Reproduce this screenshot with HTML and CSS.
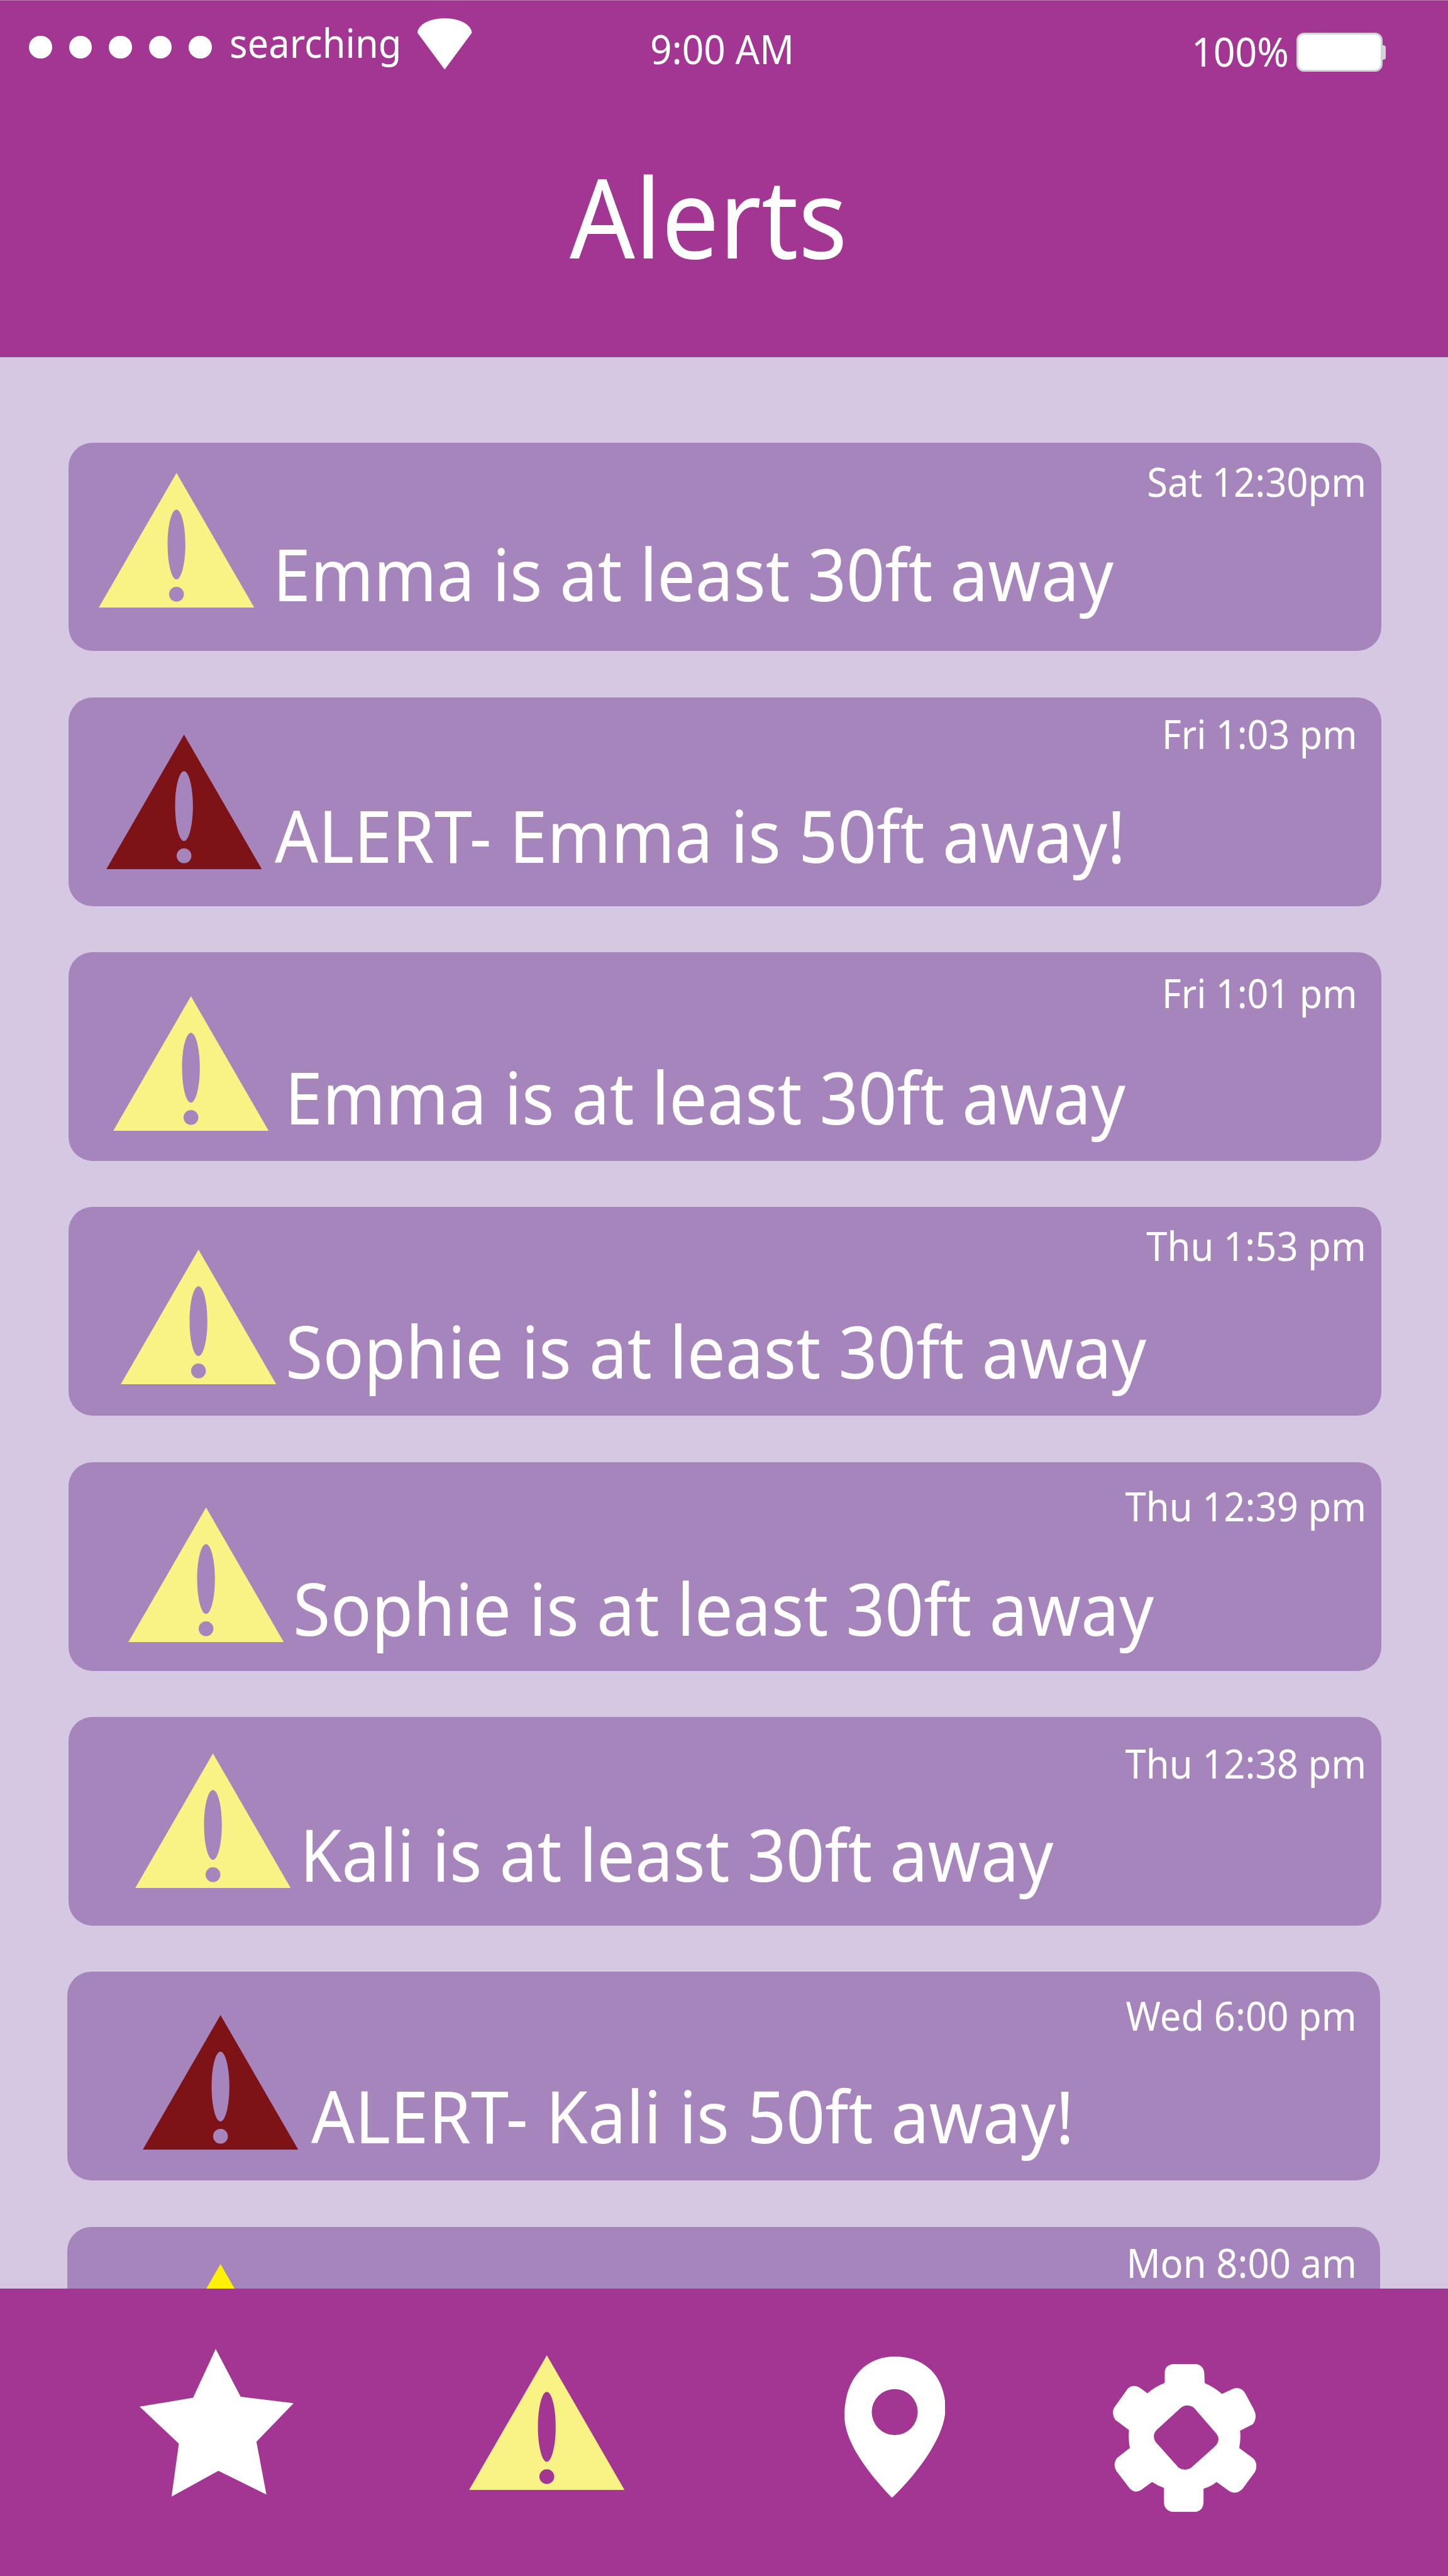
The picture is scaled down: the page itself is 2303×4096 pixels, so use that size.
FILE: index.html
```html
<!DOCTYPE html>
<html lang="en">
<head>
<meta charset="utf-8">
<title>Alerts</title>
<link rel="stylesheet" href="styles.css">
</head>
<body>
<svg width="0" height="0" class="sprite" aria-hidden="true">
  <symbol id="warning" viewBox="0 0 336 291">
    <path fill-rule="evenodd" d="M168 0L336 291H0ZM168 79C157.400 79 148.800 112.800 148.800 154.500S157.400 230 168 230S187.200 196.200 187.200 154.500S178.600 79 168 79ZM168 246A16 16 0 0 0 168 278A16 16 0 0 0 168 246Z"/>
  </symbol>
</svg>
<div class="screen">
  <header class="header">
    <div class="status">
      <div class="signal"><i></i><i></i><i></i><i></i><i></i></div>
      <span class="status-text carrier">searching</span>
      <svg class="wifi" viewBox="0 0 117.2 110.7"><path d="M0 31.700A58.600 31.700 0 0 1 117.200 31.700L58.600 110.700Z"/></svg>
      <span class="status-text clock">9:00 AM</span>
      <span class="status-text charge">100%</span>
      <div class="battery"><div class="battery-body"></div><div class="battery-tip"></div></div>
    </div>
    <h1 class="title">Alerts</h1>
  </header>

  <main class="list">
    <article class="card card-1">
      <svg class="icon"><use href="#warning"/></svg>
      <div class="body"><time class="time">Sat 12:30pm</time><p class="message">Emma is at least 30ft away</p></div>
    </article>
    <article class="card card-2 danger">
      <svg class="icon"><use href="#warning"/></svg>
      <div class="body"><time class="time">Fri 1:03 pm</time><p class="message">ALERT- Emma is 50ft away!</p></div>
    </article>
    <article class="card card-3">
      <svg class="icon"><use href="#warning"/></svg>
      <div class="body"><time class="time">Fri 1:01 pm</time><p class="message">Emma is at least 30ft away</p></div>
    </article>
    <article class="card card-4">
      <svg class="icon"><use href="#warning"/></svg>
      <div class="body"><time class="time">Thu 1:53 pm</time><p class="message">Sophie is at least 30ft away</p></div>
    </article>
    <article class="card card-5">
      <svg class="icon"><use href="#warning"/></svg>
      <div class="body"><time class="time">Thu 12:39 pm</time><p class="message">Sophie is at least 30ft away</p></div>
    </article>
    <article class="card card-6">
      <svg class="icon"><use href="#warning"/></svg>
      <div class="body"><time class="time">Thu 12:38 pm</time><p class="message">Kali is at least 30ft away</p></div>
    </article>
    <article class="card card-7 danger">
      <svg class="icon"><use href="#warning"/></svg>
      <div class="body"><time class="time">Wed 6:00 pm</time><p class="message">ALERT- Kali is 50ft away!</p></div>
    </article>
    <article class="card card-8 fresh">
      <svg class="icon"><use href="#warning"/></svg>
      <div class="body"><time class="time">Mon 8:00 am</time></div>
    </article>
  </main>

  <nav class="tabs">
    <svg class="tab-star" viewBox="301 5069 333 319"><path d="M465.300 5069L519.200 5172L633.600 5186.100L553.200 5269.100L574.800 5383.300L471.100 5332L370 5387.700L385.700 5273.200L301.100 5193.500L416.400 5174.300Z"/></svg>
    <svg class="tab-warning"><use href="#warning"/></svg>
    <svg class="tab-pin" viewBox="0 0 218 305"><path fill-rule="evenodd" d="M108.600 0C175 0 218 44 218 113C218 168 165 245 102.800 305C54 254 0 186 0 127.800C0 50 44 0 108.600 0ZM108.600 70.200A49.700 49.700 0 0 0 108.600 169.600A49.700 49.700 0 0 0 108.600 70.200Z"/></svg>
    <svg class="tab-gear" viewBox="0 0 310 318.7"><path fill-rule="evenodd" d="M111.900 40.600V18.500Q111.900 3 129.300 0H179.900Q196 3 197.300 20.300L198.100 41Q219 50 235.400 64.600L258 54Q273 47 284.400 60.900L304.200 97.900Q313 115 301.800 130L274.400 143.700Q276.500 162 272.700 181.300L303.400 203.900Q314 216 306.700 232.700L279.400 269.600Q264 284 248.700 272.500L223.800 254.400Q212 264 195.600 268.900V299.100Q194.500 316 179.900 318.700H127.700Q111 315 110.300 299.100V267.400Q96 262 84.600 254.400L61.300 271.400Q48 280 36.500 268.800L7.500 230.800Q-1 216 9.100 202.400L36.500 181.300Q33 162 34.800 142.500L5 120Q-3.500 107 2.500 94.200L33.200 51.700Q45 43 58 51L74.600 63.200Q90 49 111.900 40.600ZM146.700 94.200Q160 84 174.900 94.200L220.500 147Q235 162 220.500 177.300L168.300 224.200Q155 232 141.800 223.400L92 168Q84 155 93.700 142.900Z"/></svg>
  </nav>
</div>
</body>
</html>
```

FILE: styles.css
```css
* { box-sizing: border-box; }

body {
  margin: 0;
  font-family: "Noto Sans", "Open Sans", sans-serif;
  color: #fff;
}

.sprite { position: absolute; }

svg { display: block; flex: none; }

.screen {
  display: flex;
  flex-direction: column;
  width: 2303px;
  height: 4096px;
  background: #d5c8e2;
  overflow: hidden;
}

/* Header */
.header {
  flex: none;
  height: 568px;
  background: #a23692;
  box-shadow: inset 0 1px 0 #c080b5;
}

.status {
  display: flex;
  align-items: flex-start;
  height: 120px;
  padding-left: 46px;
}

.signal {
  display: flex;
  gap: 26.9px;
  margin-top: 56.7px;
}

.signal i {
  width: 36.7px;
  height: 36.7px;
  border-radius: 50%;
  background: #fff;
}

.status-text {
  flex: none;
  font-size: 63.6px;
  line-height: 72px;
  white-space: nowrap;
  transform-origin: left;
}

.carrier { width: 291.7px; margin: 31.7px 0 0 27.6px; transform: scaleX(.938); }
.clock { width: 241px; margin: 41.6px 0 0 283.8px; transform: scaleX(.95); }
.charge { width: 162px; margin: 45.7px 0 0 619.6px; transform: scaleX(.955); }

.wifi {
  width: 86.4px;
  height: 81.6px;
  margin: 28.7px 0 0 7.9px;
  fill: #fff;
}

.battery {
  display: flex;
  align-items: center;
  margin: 52.3px 0 0 4.6px;
}

.battery-body {
  width: 137.8px;
  height: 61.9px;
  border: 3px solid #d1d3d4;
  border-radius: 12px;
  background: #fff;
}

.battery-tip {
  width: 8px;
  height: 23px;
  margin-left: -3px;
  border-radius: 0 4px 4px 0;
  background: #d1d3d4;
}

.title {
  width: max-content;
  margin: 122.8px 0 0 905.6px;
  font-size: 174.8px;
  font-weight: 400;
  line-height: 200px;
  transform: scaleX(.931);
  transform-origin: left;
}

/* Alert list */
.list {
  flex: 1;
  min-height: 0;
  display: flex;
  flex-direction: column;
  gap: 73.65px;
  padding: 135.5px 105.7px 0 109.2px;
  overflow: hidden;
}

.card {
  --fit: .935;
  --time-fit: .94;
  --edge: 24.3px;
  flex: none;
  display: flex;
  align-items: flex-start;
  height: 331.7px;
  border-radius: 38px;
  background: #a685bc;
}

.icon {
  width: 247.4px;
  height: 214.2px;
  margin: var(--icon-y) 0 0 var(--icon-x);
  fill: #f9f285;
}

.danger .icon { fill: #7d1317; }
.fresh .icon { fill: #fff200; }

.body {
  flex: 1;
  min-width: 0;
  display: flex;
  flex-direction: column;
}

.time {
  align-self: flex-end;
  margin: var(--time-y) var(--edge) 0 0;
  font-size: 63.6px;
  line-height: 72px;
  white-space: nowrap;
  transform: scaleX(var(--time-fit));
  transform-origin: right;
}

.message {
  width: max-content;
  margin: var(--text-y) 0 0 var(--text-x);
  font-size: 115px;
  line-height: 130px;
  white-space: nowrap;
  transform: scaleX(var(--fit));
  transform-origin: left;
}

.card-1 { --icon-x: 47.8px; --icon-y: 48.2px; --time-y: 26.1px; --text-x: 30px; --text-y: 45.9px; }
.card-2 { --icon-x: 59.6px; --icon-y: 59px; --time-y: 21.9px; --text-x: 21.1px; --text-y: 60.3px; --edge: 39.2px; --fit: .943; --time-fit: .931; }
.card-3 { --icon-x: 71px; --icon-y: 69.5px; --time-y: 29.3px; --text-x: 25.4px; --text-y: 63.4px; --edge: 39.2px; --time-fit: .931; }
.card-4 { --icon-x: 82.8px; --icon-y: 67.4px; --time-y: 25.8px; --text-x: 14.6px; --text-y: 65.5px; --fit: .9405; }
.card-5 { --icon-x: 94.6px; --icon-y: 71.7px; --time-y: 34.6px; --text-x: 15.3px; --text-y: 60.1px; --fit: .9405; }
.card-6 { --icon-x: 106.3px; --icon-y: 57.9px; --time-y: 37.9px; --text-x: 14.6px; --text-y: 42.7px; }
.card-7 { --icon-x: 119.5px; --icon-y: 68.8px; --time-y: 33.5px; --text-x: 21.3px; --text-y: 57.9px; --edge: 37.3px; --fit: .943; }
.card-8 { --icon-x: 120px; --icon-y: 59px; --time-y: 21.5px; --edge: 37.3px; }

.card-7, .card-8 { margin: 0 1.9px 0 -1.9px; }

/* Bottom tabs */
.tabs {
  flex: none;
  display: flex;
  align-items: flex-start;
  height: 457px;
  padding-left: 221.8px;
  background: #a23692;
  fill: #fff;
}

.tab-star { width: 245.4px; height: 235px; margin-top: 96px; }
.tab-warning { width: 247.4px; height: 214.4px; margin: 106.4px 0 0 278.4px; fill: #f9f285; }
.tab-pin { width: 160.7px; height: 224.7px; margin: 107.7px 0 0 349.7px; }
.tab-gear { width: 228.5px; height: 234.9px; margin: 120.2px 0 0 266.9px; }
```
